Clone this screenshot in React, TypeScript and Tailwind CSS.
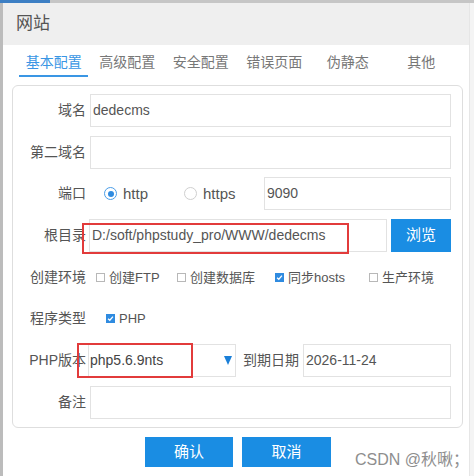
import { useState } from "react";

const tabs = ["基本配置", "高级配置", "安全配置", "错误页面", "伪静态", "其他"];

function Label({ text }: { text: string }) {
  return <div className="w-[73px] shrink-0 text-right text-[14px] text-[#555]">{text}</div>;
}

function Input({ value, className = "" }: { value?: string; className?: string }) {
  return (
    <div
      className={`flex h-[33px] items-center border border-[#e2e2e2] bg-white px-[2px] text-[14px] text-[#555] ${className}`}
    >
      {value}
    </div>
  );
}

function Radio({ checked, label }: { checked: boolean; label: string }) {
  return (
    <div className="flex items-center gap-[6px] whitespace-nowrap">
      <span
        className={`flex h-[13px] w-[13px] items-center justify-center rounded-full border bg-white ${
          checked ? "border-[#4a9de8]" : "border-[#cfcfcf]"
        }`}
      >
        {checked && <span className="h-[6px] w-[6px] rounded-full bg-[#2f8be0]" />}
      </span>
      <span className="text-[15px] text-[#555]">{label}</span>
    </div>
  );
}

function Check({ checked, label, className = "" }: { checked: boolean; label: string; className?: string }) {
  return (
    <div className={`flex shrink-0 items-center gap-[4px] whitespace-nowrap ${className}`}>
      <span
        className={`flex h-[9px] w-[9px] items-center justify-center ${
          checked ? "bg-[#2f8be0]" : "border border-[#b8b8b8] bg-white"
        }`}
      >
        {checked && (
          <svg width="7" height="7" viewBox="0 0 8 8">
            <path d="M1.2 4.2 L3.2 6 L6.8 1.8" fill="none" stroke="#fff" strokeWidth="1.4" />
          </svg>
        )}
      </span>
      <span className="text-[13px] text-[#555]">{label}</span>
    </div>
  );
}

export default function App() {
  const [active] = useState(0);
  return (
    <div
      className="relative flex h-[476px] w-[474px] flex-col overflow-hidden bg-[#f4f4f4]"
      style={{ fontFamily: '"Liberation Sans", "Noto Sans CJK SC", sans-serif' }}
    >
      <div className="flex h-[3px] shrink-0 bg-[#c6c6c6]">
        <div className="w-[50px] bg-[#3d7fc4]" />
      </div>
      <div className="flex flex-1">
        <div className="w-[3px] bg-[#bcbcbc]" />
        <div className="flex w-[467px] flex-col border-r border-[#e6e6e6] bg-white">
          <div className="flex h-[42px] items-center bg-[#efefef] pl-[13px] text-[17px] text-[#555]">
            网站
          </div>
          <div className="flex h-[33px] pl-[14px]">
            {tabs.map((t, i) => (
              <div key={t} className="flex w-[73.5px] flex-col items-center">
                <div
                  className={`mt-[7px] text-[14px] leading-[20px] ${
                    i === active ? "text-[#3a96e4]" : "text-[#777]"
                  }`}
                >
                  {t}
                </div>
                <div
                  className={`mt-[3px] h-[2px] w-[69px] ${i === active ? "bg-[#3a96e4]" : ""}`}
                />
              </div>
            ))}
          </div>

          <div className="ml-[9px] mr-[6px] mt-[7px] flex flex-col gap-[8.7px] rounded-[6px] border border-[#dedede] pb-[8px] pr-[11px] pt-[8px]">
            <div className="flex h-[33px] items-center gap-[4px]">
              <Label text="域名" />
              <Input value="dedecms" className="flex-1" />
            </div>
            <div className="flex h-[33px] items-center gap-[4px]">
              <Label text="第二域名" />
              <Input className="flex-1" />
            </div>
            <div className="flex h-[33px] items-center">
              <Label text="端口" />
              <div className="ml-[18px] w-[80px]">
                <Radio checked label="http" />
              </div>
              <div className="w-[80px]">
                <Radio checked={false} label="https" />
              </div>
              <Input value="9090" className="flex-1" />
            </div>
            <div className="flex h-[33px] items-center gap-[3px]">
              <Label text="根目录" />
              <Input value="D:/soft/phpstudy_pro/WWW/dedecms" className="w-[298px]" />
              <button className="ml-[1px] h-[33px] flex-1 bg-[#1a8de3] text-[15px] text-white">
                浏览
              </button>
            </div>
            <div className="flex h-[33px] items-center">
              <Label text="创建环境" />
              <div className="ml-[10px] flex items-center">
                <Check checked={false} label="创建FTP" className="w-[81px]" />
                <Check checked={false} label="创建数据库" className="w-[98px]" />
                <Check checked label="同步hosts" className="w-[94px]" />
                <Check checked={false} label="生产环境" />
              </div>
            </div>
            <div className="flex h-[33px] items-center">
              <Label text="程序类型" />
              <div className="ml-[20px]">
                <Check checked label="PHP" />
              </div>
            </div>
            <div className="flex h-[33px] items-center">
              <Label text="PHP版本" />
              <div className="ml-[2px] flex h-[33px] w-[148px] items-center justify-between border border-[#e2e2e2] pl-[1px] pr-[3px] text-[14px] text-[#444]">
                <span>php5.6.9nts</span>
                <svg width="8" height="9" viewBox="0 0 8 9">
                  <path d="M0 0 H8 L4 9 Z" fill="#1a7fd8" />
                </svg>
              </div>
              <div className="ml-[7px] w-[60px] whitespace-nowrap text-[14px] text-[#555]">到期日期</div>
              <Input value="2026-11-24" className="flex-1" />
            </div>
            <div className="flex h-[33px] items-center gap-[4px]">
              <Label text="备注" />
              <Input className="flex-1" />
            </div>
          </div>

          <div className="ml-[142px] mt-[9px] flex gap-[9px]">
            <button className="h-[30px] w-[88px] bg-[#1a8de3] text-[15px] text-white">确认</button>
            <button className="h-[30px] w-[89px] bg-[#1a8de3] text-[15px] text-white">取消</button>
          </div>
        </div>
      </div>

      <div className="pointer-events-none absolute left-[82px] top-[223px] h-[31px] w-[267px] border-2 border-[#e23b3b]" />
      <div className="pointer-events-none absolute left-[77px] top-[343px] h-[35px] w-[116px] border-2 border-[#e23b3b]" />
      <div className="absolute left-[355px] top-[448px] whitespace-nowrap text-[16px] text-[#8e8e8e]">
        CSDN @秋啾；
      </div>
    </div>
  );
}
